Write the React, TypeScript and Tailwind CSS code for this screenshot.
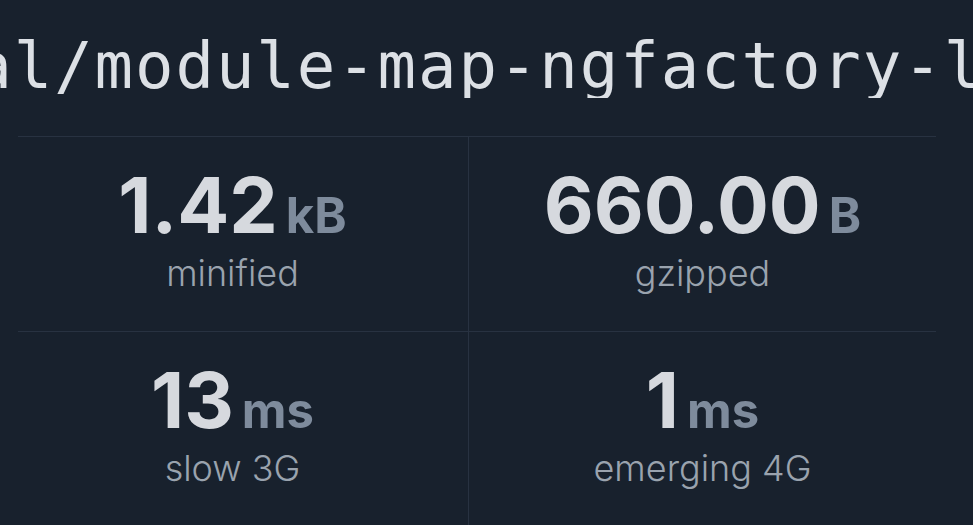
import React from "react";

type Stat = { value: string; unit: string; label: string };

const stats: Stat[] = [
  { value: "1.42", unit: "kB", label: "minified" },
  { value: "660.00", unit: "B", label: "gzipped" },
  { value: "13", unit: "ms", label: "slow 3G" },
  { value: "1", unit: "ms", label: "emerging 4G" },
];

function Cell({ stat, left }: { stat: Stat; left: boolean }) {
  return (
    <div
      className={
        left
          ? "h-[195px] border-t border-r border-[#283241] pt-[30px] pr-[21px] flex flex-col items-center"
          : "h-[195px] border-t border-[#283241] pt-[30px] flex flex-col items-center"
      }
    >
      <div className="flex items-baseline font-['Inter',sans-serif]">
        <span className="text-[77px] leading-[76px] font-bold text-[#d6d9de]">
          {stat.value}
        </span>
        <span className="ml-[8px] text-[49px] leading-[48px] font-bold text-[#7e8b9c]">
          {stat.unit}
        </span>
      </div>
      <div className="mt-[10px] text-[36px] leading-[40px] font-light text-[#9aa3ae] font-['Inter',sans-serif]">
        {stat.label}
      </div>
    </div>
  );
}

export default function App() {
  return (
    <div className="w-[973px] h-[525px] overflow-hidden bg-[#18212d]">
      <div className="pt-[34px] whitespace-nowrap overflow-hidden">
        <div className="ml-[-431px] font-['DejaVu_Sans_Mono',monospace] text-[64px] leading-[64px] tracking-[1.9px] text-[#dce0e5]">
          @nguniversal/module-map-ngfactory-loader
        </div>
      </div>
      <div className="mt-[38px] ml-[18px] w-[918px] grid grid-cols-[451px_467px]">
        {stats.map((s, i) => (
          <Cell key={i} stat={s} left={i % 2 === 0} />
        ))}
      </div>
    </div>
  );
}
